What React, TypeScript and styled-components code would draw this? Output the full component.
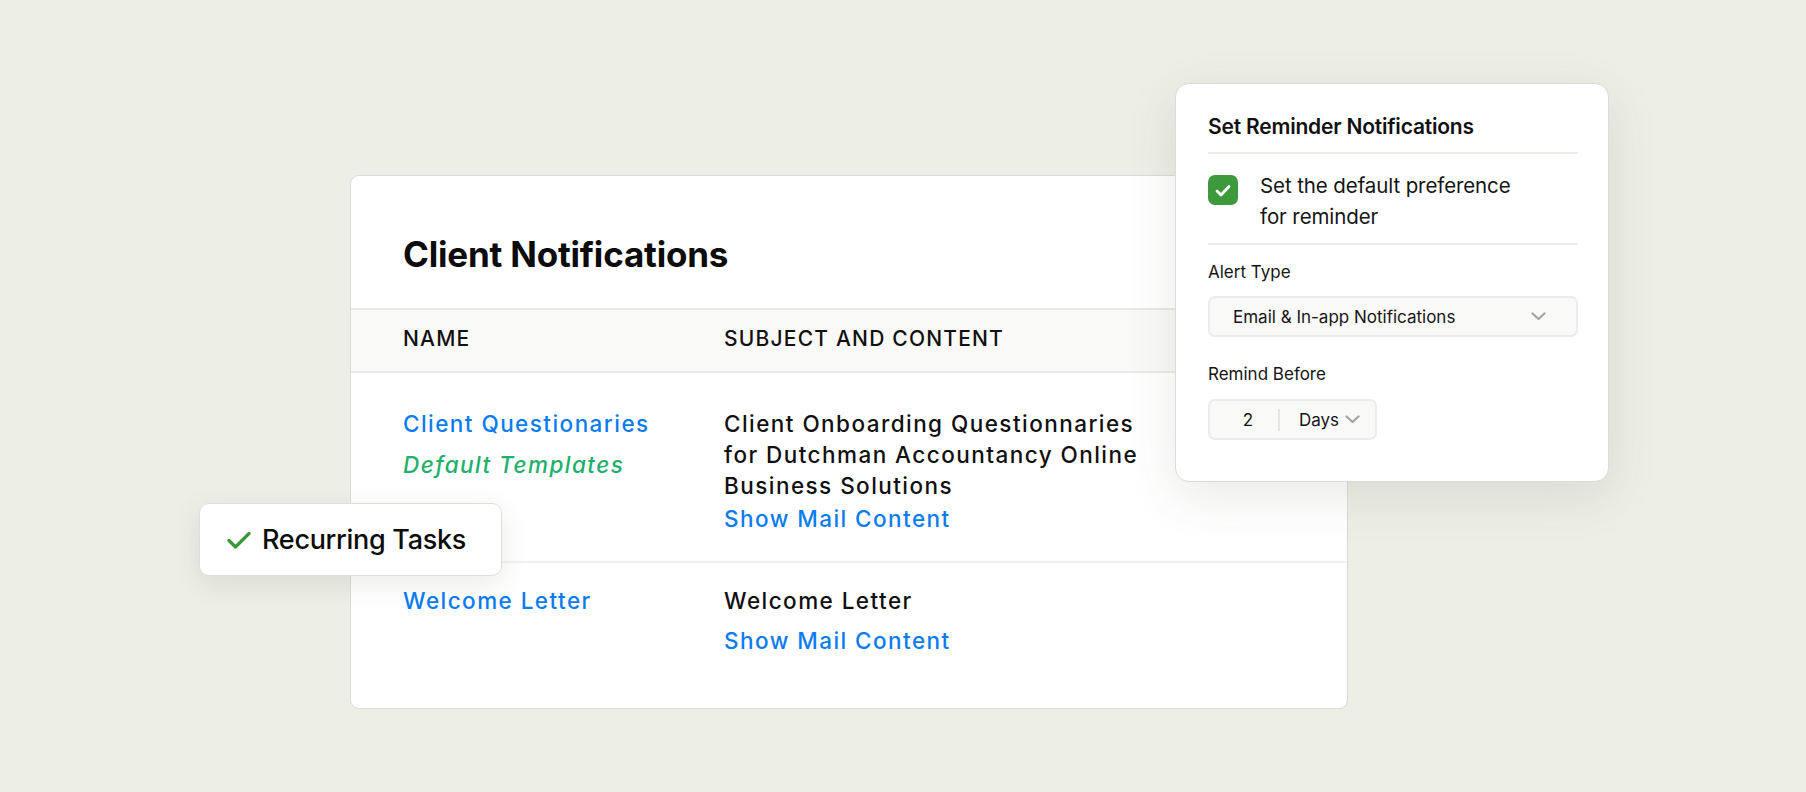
import * as React from 'react';
import styled, { createGlobalStyle } from 'styled-components';

const GlobalStyle = createGlobalStyle`
  html, body {
    margin: 0;
    padding: 0;
    background: #edeee6;
  }
  body {
    font-family: Inter, "Liberation Sans", sans-serif;
    color: #111;
  }
`;

const Page = styled.div`
  width: 1806px;
  height: 792px;
  box-sizing: border-box;
  padding: 175px 0 0 350px;
  background: #edeee6;
  overflow: hidden;
`;

const Card = styled.div`
  position: relative;
  width: 998px;
  box-sizing: border-box;
  background: #fff;
  border: 1px solid #dcdcd6;
  border-radius: 9px;
  padding: 58px 0 52px;
`;

const Title = styled.h1`
  margin: 0 0 34px 52px;
  font-size: 35px;
  line-height: 40px;
  font-weight: 700;
  letter-spacing: -0.2px;
  color: #0c0c0c;
`;

const HeadRow = styled.div`
  display: grid;
  grid-template-columns: 321px 1fr;
  align-items: center;
  height: 57px;
  box-sizing: content-box;
  padding: 0 0 4px 52px;
  background: #f9f9f8;
  border-top: 2px solid #e9e9e6;
  border-bottom: 2px solid #e9e9e6;
`;

const HeadCell = styled.div`
  font-size: 21px;
  font-weight: 500;
  letter-spacing: 1.2px;
  color: #111;
`;

const Row = styled.div<{ $top: number; $bottom: number; $last?: boolean }>`
  display: grid;
  grid-template-columns: 321px 1fr;
  padding: ${(p) => p.$top}px 0 ${(p) => p.$bottom}px 52px;
  border-bottom: ${(p) => (p.$last ? 'none' : '2px solid #f1f1ef')};
`;

const Cell = styled.div`
  display: flex;
  flex-direction: column;
  align-items: flex-start;
`;

const Line = styled.div<{ $tone?: 'dark' | 'blue' | 'green'; $gap?: number }>`
  font-size: 22.5px;
  line-height: 31px;
  font-weight: 500;
  letter-spacing: 1.45px;
  white-space: nowrap;
  margin-top: ${(p) => p.$gap ?? 0}px;
  color: ${(p) => (p.$tone === 'blue' ? '#0a7cf0' : p.$tone === 'green' ? '#22b06c' : '#101010')};
  font-style: ${(p) => (p.$tone === 'green' ? 'italic' : 'normal')};
`;

const Chip = styled.div`
  position: absolute;
  left: -152px;
  top: 327px;
  width: 303px;
  height: 73px;
  box-sizing: border-box;
  display: flex;
  align-items: center;
  gap: 11px;
  padding-left: 27px;
  background: #fff;
  border: 1px solid #dedfd9;
  border-radius: 10px;
  box-shadow: 0 8px 28px rgba(60, 60, 40, 0.1);
  font-size: 27px;
  font-weight: 500;
  letter-spacing: -0.3px;
  color: #0c0c0c;
`;

const Popup = styled.div`
  position: absolute;
  left: 824px;
  top: -93px;
  width: 434px;
  box-sizing: border-box;
  padding: 30px 30px 41px 32px;
  background: #fff;
  border: 1px solid #dcdcd6;
  border-radius: 14px;
  box-shadow: 0 14px 50px rgba(70, 70, 50, 0.12);
`;

const PopTitle = styled.div`
  font-size: 21px;
  line-height: 26px;
  font-weight: 600;
  letter-spacing: -0.2px;
  color: #111;
  padding-bottom: 12px;
  border-bottom: 2px solid #ebebe8;
`;

const CheckRow = styled.div`
  display: flex;
  align-items: flex-start;
  gap: 22px;
  padding: 16px 0 11px;
  border-bottom: 2px solid #ebebe8;
`;

const CheckBox = styled.div`
  flex: none;
  width: 30px;
  height: 30px;
  margin-top: 5px;
  border-radius: 7px;
  background: #3d9a3c;
  display: flex;
  align-items: center;
  justify-content: center;
`;

const CheckText = styled.div`
  font-size: 20.5px;
  line-height: 31px;
  letter-spacing: -0.1px;
  color: #151515;
`;

const Label = styled.div<{ $gap: number }>`
  margin-top: ${(p) => p.$gap}px;
  font-size: 17px;
  line-height: 20px;
  color: #151515;
`;

const Select = styled.div`
  margin-top: 14px;
  height: 41px;
  box-sizing: border-box;
  display: flex;
  align-items: center;
  justify-content: space-between;
  padding: 0 30px 0 23px;
  background: #f9f9f8;
  border: 2px solid #ececea;
  border-radius: 7px;
  font-size: 17px;
  color: #151515;
`;

const NumberBox = styled.div`
  margin-top: 15px;
  width: 169px;
  height: 41px;
  box-sizing: border-box;
  display: flex;
  align-items: center;
  background: #f9f9f8;
  border: 2px solid #ececea;
  border-radius: 7px;
  font-size: 17px;
  color: #151515;
`;

const NumPart = styled.div`
  width: 70px;
  padding-left: 8px;
  box-sizing: border-box;
  text-align: center;
  border-right: 2px solid #e6e6e3;
  line-height: 22px;
`;

const UnitPart = styled.div`
  display: flex;
  align-items: center;
  gap: 6px;
  padding-left: 19px;
`;

const Chevron = () => (
  <svg width="15" height="9" viewBox="0 0 15 9" fill="none">
    <path d="M1.5 1.5 L7.5 7 L13.5 1.5" stroke="#a3a3a0" strokeWidth="2.2" strokeLinecap="round" strokeLinejoin="round" />
  </svg>
);

const App = () => {
  return (
    <>
      <GlobalStyle />
      <Page>
        <Card>
          <Title>Client Notifications</Title>
          <HeadRow>
            <HeadCell>NAME</HeadCell>
            <HeadCell>SUBJECT AND CONTENT</HeadCell>
          </HeadRow>
          <Row $top={35} $bottom={27}>
            <Cell>
              <Line $tone="blue">Client Questionaries</Line>
              <Line $tone="green" $gap={10}>Default Templates</Line>
            </Cell>
            <Cell>
              <Line>Client Onboarding Questionnaries</Line>
              <Line>for Dutchman Accountancy Online</Line>
              <Line>Business Solutions</Line>
              <Line $tone="blue" $gap={2}>Show Mail Content</Line>
            </Cell>
          </Row>
          <Row $top={22} $bottom={0} $last>
            <Cell>
              <Line $tone="blue">Welcome Letter</Line>
            </Cell>
            <Cell>
              <Line>Welcome Letter</Line>
              <Line $tone="blue" $gap={9}>Show Mail Content</Line>
            </Cell>
          </Row>

          <Chip>
            <svg width="24" height="18" viewBox="0 0 24 18" fill="none">
              <path d="M2 9.5 L8.5 16 L22 2.5" stroke="#3a9a3a" strokeWidth="3.2" strokeLinecap="round" strokeLinejoin="round" />
            </svg>
            Recurring Tasks
          </Chip>

          <Popup>
            <PopTitle>Set Reminder Notifications</PopTitle>
            <CheckRow>
              <CheckBox>
                <svg width="16" height="13" viewBox="0 0 16 13" fill="none">
                  <path d="M2 7 L6 11 L14 2.5" stroke="#fff" strokeWidth="2.8" strokeLinecap="round" strokeLinejoin="round" />
                </svg>
              </CheckBox>
              <CheckText>
                Set the default preference
                <br />
                for reminder
              </CheckText>
            </CheckRow>
            <Label $gap={17}>Alert Type</Label>
            <Select>
              <span>Email &amp; In-app Notifications</span>
              <Chevron />
            </Select>
            <Label $gap={27}>Remind Before</Label>
            <NumberBox>
              <NumPart>2</NumPart>
              <UnitPart>
                Days
                <Chevron />
              </UnitPart>
            </NumberBox>
          </Popup>
        </Card>
      </Page>
    </>
  );
};

export default App;
